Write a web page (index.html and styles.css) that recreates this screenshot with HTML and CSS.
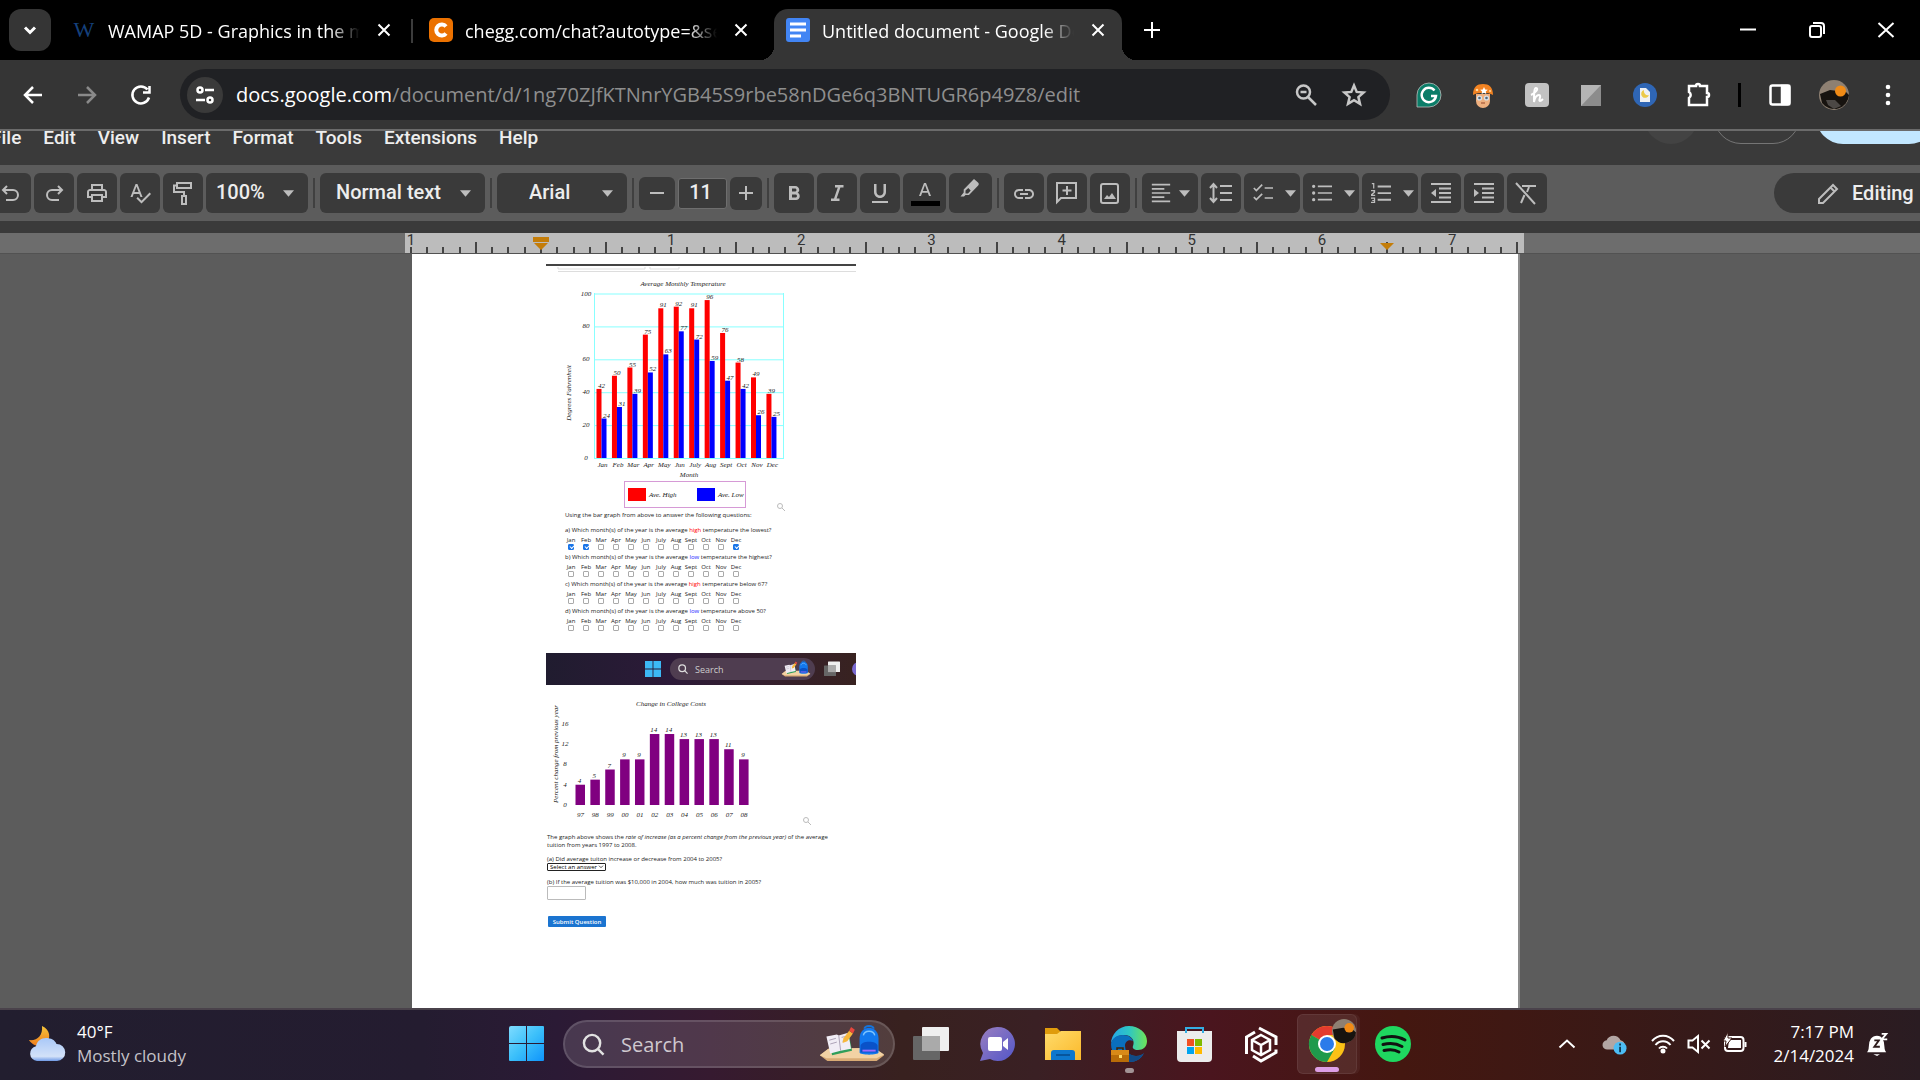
FILE: index.html
```html
<!DOCTYPE html>
<html lang="en">
<head>
    <meta charset="UTF-8">
    <meta name="viewport" content="width=device-width, initial-scale=1.0">
    <title>Untitled document - Google Docs</title>
    <link rel="stylesheet" href="styles.css">
</head>
<body>
    <header class="tabs">
        <button class="tab-search" aria-label="Search tabs"><svg viewBox="0 0 24 24"><path d="M7 9.500l5 5 5-5"/></svg></button>
        <div class="tab first">
            <span class="wamap">W</span>
            <a href="#" class="tab-title">WAMAP 5D - Graphics in the media</a>
            <button class="close" aria-label="Close tab"><svg viewBox="0 0 24 24"><path d="M6.500 6.500l11 11M17.500 6.500l-11 11"/></svg></button>
        </div>
        <div class="tab second">
            <svg class="favicon" viewBox="0 0 24 24"><rect width="24" height="24" rx="5" fill="#eb7100"/><path d="M17 8.500A5.500 5.500 0 1 0 17 15.500" fill="none" stroke="#fff" stroke-width="4"/></svg>
            <a href="#" class="tab-title">chegg.com/chat?autotype=&amp;search</a>
            <button class="close" aria-label="Close tab"><svg viewBox="0 0 24 24"><path d="M6.500 6.500l11 11M17.500 6.500l-11 11"/></svg></button>
        </div>
        <div class="tab active">
            <svg class="favicon" viewBox="0 0 24 24"><rect width="24" height="24" rx="3" fill="#4285f4"/><path d="M4 6h16M4 12h16M4 18h11" stroke="#fff" stroke-width="3"/></svg>
            <a href="#" class="tab-title">Untitled document - Google Docs</a>
            <button class="close" aria-label="Close tab"><svg viewBox="0 0 24 24"><path d="M6.500 6.500l11 11M17.500 6.500l-11 11"/></svg></button>
        </div>
        <button class="new-tab" aria-label="New tab"><svg viewBox="0 0 24 24"><path d="M12 4v16M4 12h16"/></svg></button>
        <div class="window-buttons">
            <button aria-label="Minimize"><svg viewBox="0 0 24 24"><path d="M4 11.500h16"/></svg></button>
            <button aria-label="Restore"><svg viewBox="0 0 24 24"><rect x="5" y="8" width="11" height="11" rx="2"/><path d="M8 5h8a3 3 0 0 1 3 3v8"/></svg></button>
            <button aria-label="Close"><svg viewBox="0 0 24 24"><path d="M4.500 5l15 14M19.500 5l-15 14"/></svg></button>
        </div>
    </header>

    <div class="browser-bar">
        <button class="nav-btn" aria-label="Back"><svg viewBox="0 0 24 24"><path d="M21 12H4M12 4l-8 8 8 8"/></svg></button>
        <button class="nav-btn dim" aria-label="Forward"><svg viewBox="0 0 24 24"><path d="M3 12h17M12 4l8 8-8 8"/></svg></button>
        <button class="nav-btn" aria-label="Reload"><svg viewBox="0 0 24 24"><path d="M20 14.500A8.500 8.500 0 1 1 18.500 6.500M20.500 3v6.500H14"/></svg></button>
        <div class="address">
            <button class="site-info" aria-label="Site information"><svg viewBox="0 0 24 24"><circle cx="7" cy="7" r="2.500"/><path d="M12 7h9M3 17h9"/><circle cx="17" cy="17" r="2.500"/></svg></button>
            <a href="#" class="url"><b>docs.google.com</b>/document/d/1ng70ZJfKTNnrYGB45S9rbe58nDGe6q3BNTUGR6p49Z8/edit</a>
            <button class="addr-btn" aria-label="Zoom"><svg viewBox="0 0 24 24"><circle cx="9.500" cy="9" r="6.500"/><path d="M14 14l8 8M6.500 9h6"/></svg></button>
            <button class="addr-btn" aria-label="Bookmark"><svg viewBox="0 0 24 24"><path d="M12 2.500l2.700 6.400 6.900.6-5.200 4.600 1.600 6.800-6-3.600-6 3.600 1.600-6.800-5.200-4.600 6.900-.6z"/></svg></button>
        </div>
        <div class="extensions">
            <button aria-label="Grammarly"><svg viewBox="0 0 24 24"><path d="M12 0a12 12 0 1 1 0 24H0V12A12 12 0 0 1 12 0z" fill="#0b7d68" stroke="#bbb" stroke-width=".8"/><path d="M17.500 7.500A7.200 7.200 0 1 0 19 13h-5" fill="none" stroke="#fff" stroke-width="2.400"/></svg></button>
            <button aria-label="Helper"><svg viewBox="0 0 24 24"><path d="M5 11h14v7a6 6 0 0 1-14 0z" fill="#efb07f"/><path d="M2 12C2 4 6 1 12 1s10 3 10 11c-5-3-15-3-20 0z" fill="#f28322"/><path d="M13 4l1.200 2.400 2.600.3-2 1.800.5 2.600-2.300-1.300-2.400 1.300.5-2.600-2-1.800 2.700-.3z" fill="#fff"/><circle cx="6" cy="7" r="1.300" fill="#ffd9a0"/><circle cx="19" cy="8" r="1" fill="#ffd9a0"/><circle cx="8.500" cy="15" r="2.600" fill="#d8e3ec"/><circle cx="15.500" cy="15" r="2.600" fill="#d8e3ec"/><circle cx="8.500" cy="15" r="1.300" fill="#52687c"/><circle cx="15.500" cy="15" r="1.300" fill="#52687c"/><path d="M10 20h4" stroke="#b46a46" stroke-width="1.500"/></svg></button>
            <button aria-label="Honey"><svg viewBox="0 0 24 24"><rect width="24" height="24" rx="4" fill="#c2c2c2"/><path d="M6 12c5-2 8-7 5-7-2 0-2 6-2 14 1-5 3-7 5-7 3 0-1 6 1 6 1 0 2-1 3-2" fill="none" stroke="#fff" stroke-width="2"/></svg></button>
            <button aria-label="Reader"><svg viewBox="0 0 24 24"><rect x="2" y="2" width="20" height="21" fill="#8c8c8c"/><path d="M2 23V2h20z" fill="#b4b4b4"/></svg></button>
            <button aria-label="Docs dark mode"><svg viewBox="0 0 24 24"><circle cx="12" cy="12" r="12" fill="#2f66b5"/><path d="M7 5h6l4 4v10H7z" fill="#eef1f4"/><path d="M11 7a4 4 0 1 0 5 5 4 4 0 0 1-5-5z" fill="#ecca48"/></svg></button>
            <button class="line" aria-label="Extensions"><svg viewBox="0 0 24 24"><path d="M2 3h7a2 2 0 0 1 4 0h7v7a2 2 0 0 1 0 4v8H2v-7a3.500 3.500 0 0 0 0-6z"/></svg></button>
            <i class="ext-sep"></i>
            <button class="line" aria-label="Side panel"><svg viewBox="0 0 24 24"><rect x="2.500" y="2.500" width="19" height="19" rx="2"/><path d="M14 3h7v18h-7z" fill="#fff"/></svg></button>
            <button aria-label="Profile"><svg class="avatar" viewBox="0 0 30 30"><circle cx="15" cy="15" r="15" fill="#8e8072"/><path d="M1 14l10-4 16 2 3 3a15 15 0 0 1-27 8z" fill="#17130f"/><path d="M7 20l9 0 6 6-7 3-6-4z" fill="#4c4845"/><circle cx="21.500" cy="11" r="5.500" fill="#f18b16"/></svg></button>
            <button aria-label="Menu"><svg viewBox="0 0 24 24" fill="#fff"><circle cx="12" cy="4" r="2.300"/><circle cx="12" cy="12" r="2.300"/><circle cx="12" cy="20" r="2.300"/></svg></button>
        </div>
    </div>

    <nav class="menu">
        <a href="#">File</a>
        <a href="#">Edit</a>
        <a href="#">View</a>
        <a href="#">Insert</a>
        <a href="#">Format</a>
        <a href="#">Tools</a>
        <a href="#">Extensions</a>
        <a href="#">Help</a>
        <div class="doc-actions"><button class="history" aria-label="History"></button><button class="meet" aria-label="Meet"></button><button class="share" aria-label="Share"></button></div>
    </nav>

    <div class="toolbar">
        <button class="tool" aria-label="Undo"><svg viewBox="0 0 24 24" class="stroke"><path d="M8 5L4 9l4 4M4 9h10a5 5 0 0 1 0 10H7"/></svg></button>
        <button class="tool" aria-label="Redo"><svg viewBox="0 0 24 24" class="stroke"><path d="M16 5l4 4-4 4M20 9H10a5 5 0 0 0 0 10h7"/></svg></button>
        <button class="tool" aria-label="Print"><svg viewBox="0 0 24 24"><path d="M19 8h-1V3H6v5H5c-1.660 0-3 1.340-3 3v6h4v4h12v-4h4v-6c0-1.660-1.340-3-3-3zM8 5h8v3H8V5zm8 14H8v-4h8v4zm2-4v-2H6v2H4v-4c0-.55.45-1 1-1h14c.55 0 1 .45 1 1v4h-2z"/></svg></button>
        <button class="tool" aria-label="Spelling"><svg viewBox="0 0 24 24"><path d="M12.450 16h2.090L9.430 3H7.570L2.460 16h2.090l1.120-3h5.640l1.140 3zm-6.020-5L8.500 5.480 10.570 11H6.430zm15.160.59l-8.090 8.090L9.830 16l-1.410 1.410 5.090 5.090L23 13l-1.410-1.410z"/></svg></button>
        <button class="tool" aria-label="Paint format"><svg viewBox="0 0 24 24" class="stroke"><path d="M6 2h14v5H6zM6 4.500H3V11h10v4M11 15h4v8h-4z"/></svg></button>
        <div class="pick zoom"><select aria-label="Zoom"><option>100%</option></select><svg viewBox="0 0 12 8"><path d="M0 1h12L6 8z"/></svg></div>
        <i class="sep"></i>
        <div class="pick style"><select aria-label="Styles"><option>Normal text</option></select><svg viewBox="0 0 12 8"><path d="M0 1h12L6 8z"/></svg></div>
        <i class="sep"></i>
        <div class="pick font"><select aria-label="Font"><option>Arial</option></select><svg viewBox="0 0 12 8"><path d="M0 1h12L6 8z"/></svg></div>
        <i class="sep"></i>
        <button class="tool step minus" aria-label="Decrease font size"><svg viewBox="0 0 24 24" class="stroke"><path d="M5 12h14"/></svg></button>
        <input class="font-size" type="text" value="11" aria-label="Font size">
        <button class="tool step plus" aria-label="Increase font size"><svg viewBox="0 0 24 24" class="stroke"><path d="M5 12h14M12 5v14"/></svg></button>
        <i class="sep"></i>
        <button class="tool" aria-label="Bold"><svg viewBox="0 0 24 24"><path d="M15.600 11.790c.97-.67 1.650-1.770 1.650-2.790 0-2.260-1.750-4-4-4H7v14h7.040c2.090 0 3.710-1.700 3.710-3.790 0-1.520-.86-2.820-2.150-3.420zM10 7.500h3c.83 0 1.500.67 1.500 1.500s-.67 1.500-1.500 1.500h-3v-3zm3.500 9H10v-3h3.500c.83 0 1.500.67 1.500 1.500s-.67 1.500-1.500 1.500z"/></svg></button>
        <button class="tool" aria-label="Italic"><svg viewBox="0 0 24 24"><path d="M10 4v2.500h2.800l-3.800 11H6V20h8.500v-2.500h-2.900l3.800-11H18.500V4z"/></svg></button>
        <button class="tool" aria-label="Underline"><svg viewBox="0 0 24 24"><path d="M12 17c3.310 0 6-2.690 6-6V3h-2.500v8c0 1.930-1.570 3.500-3.500 3.500S8.500 12.930 8.500 11V3H6v8c0 3.310 2.690 6 6 6zm-8 3v2h16v-2H4z"/></svg></button>
        <button class="tool wide" aria-label="Text color"><svg viewBox="0 0 24 24"><path d="M11 2L6 15h2l1.200-3.300h5.600L16 15h2L13 2zm-1.200 8L12 4l2.200 6z"/><path d="M-2 20h29v5H-2z" fill="#000"/></svg></button>
        <button class="tool wide" aria-label="Highlight"><svg viewBox="0 -1 24 24"><path transform="translate(-1 -4)" fill-rule="evenodd" d="M16 1l4 3.500c1 1 1 2 .2 3L11 17H7.500L6 18.500H2.500l3.200-4v-3L15 2zM7.500 12.500v3H10l2.700-3-2.400-2.500z"/></svg></button>
        <i class="sep"></i>
        <button class="tool" aria-label="Link"><svg viewBox="0 0 24 24"><path d="M3.900 13c0-1.710 1.390-3.100 3.100-3.100h4V8H7c-2.760 0-5 2.240-5 5s2.240 5 5 5h4v-1.900H7c-1.710 0-3.100-1.390-3.100-3.100zM8 14h8v-2H8v2zm9-6h-4v1.900h4c1.710 0 3.100 1.390 3.100 3.100s-1.390 3.100-3.100 3.100h-4V18h4c2.760 0 5-2.240 5-5s-2.240-5-5-5z"/></svg></button>
        <button class="tool" aria-label="Comment"><svg viewBox="0 0 24 24" class="stroke"><path d="M2 21V2h19v15H6zM12 5v9M7.500 9.500h9"/></svg></button>
        <button class="tool" aria-label="Image"><svg viewBox="0 0 24 24" class="stroke"><rect x="3" y="3" width="17" height="19" rx="2"/><path d="M6 18l3-4 2 2 3-4 4 6z" fill="#bdbdbd" stroke="none"/></svg></button>
        <i class="sep"></i>
        <button class="tool split align" aria-label="Align"><svg viewBox="0 0 24 24" class="stroke"><path d="M1 2h22M1 7h15M1 12h22M1 17h15M1 22h22"/></svg><svg class="caret" viewBox="0 0 12 8"><path d="M0 1h12L6 8z"/></svg></button>
        <button class="tool" aria-label="Line spacing"><svg viewBox="0 0 24 24" class="stroke"><path d="M11 5h12M11 12h12M11 19h12M4.500 4v17M1 7l3.500-4L8 7M1 17l3.500 4L8 17"/></svg></button>
        <button class="tool split" aria-label="Checklist"><svg viewBox="0 0 24 24" class="stroke"><path d="M1 6l3 3 7-7M1 17l3 3 7-7M14 6h10M14 18h10"/></svg><svg class="caret" viewBox="0 0 12 8"><path d="M0 1h12L6 8z"/></svg></button>
        <button class="tool split" aria-label="Bulleted list"><svg viewBox="0 0 24 24" class="stroke"><path d="M7 4h17M7 12h17M7 20h17"/><circle cx="2" cy="4" r="1"/><circle cx="2" cy="12" r="1"/><circle cx="2" cy="20" r="1"/></svg><svg class="caret" viewBox="0 0 12 8"><path d="M0 1h12L6 8z"/></svg></button>
        <button class="tool split" aria-label="Numbered list"><svg viewBox="0 0 24 24"><path d="M8 3h16v2.300H8zM8 11h16v2.300H8zM8 19h16v2.300H8zM1 0h3v6.500H2.500V1.500H1zM0 8.500h5v3l-3 2.500h3v1.500H0v-2L3 11v-1H0zM0 17.500h5V24H0v-1.500h3.500v-1H1.500v-1.200h2V19H0z"/></svg><svg class="caret" viewBox="0 0 12 8"><path d="M0 1h12L6 8z"/></svg></button>
        <button class="tool" aria-label="Decrease indent"><svg viewBox="0 0 24 24" class="stroke"><path d="M2 3h20M10 7.500h12M10 12h12M10 16.500h12M2 21h20"/><path d="M7 8v8l-5-4z" fill="#bdbdbd" stroke="none"/></svg></button>
        <button class="tool" aria-label="Increase indent"><svg viewBox="0 0 24 24" class="stroke"><path d="M2 3h20M10 7.500h12M10 12h12M10 16.500h12M2 21h20"/><path d="M2 8v8l5-4z" fill="#bdbdbd" stroke="none"/></svg></button>
        <button class="tool" aria-label="Clear formatting"><svg viewBox="0 0 24 24" class="stroke"><path d="M1 2l19 21M7 5h14M14 6l-2 5M9.500 14L6 22"/></svg></button>
        <button class="mode"><svg viewBox="0 0 24 24" class="stroke"><path d="M3 22v-4L17 4l4 4L7 22zM14.500 6.500l4 4"/></svg>Editing</button>
    </div>

    <div class="ruler"><svg id="ruler" viewBox="0 0 1119 20"></svg></div>

    <main>
        <div class="page">
            <div class="worksheet">
                <svg class="chart" id="temperature" viewBox="0 0 310 247"></svg>
                <p class="intro">Using the bar graph from above to answer the following questions:</p>
                <div id="questions"></div>
                <div class="shot-bar">
                    <svg class="shot-win" viewBox="0 0 36 36"><path d="M0 0h17v17H0zM19 0h17v17H19zM0 19h17v17H0zM19 19h17v17H19z" fill="#3cb9f5"/></svg>
                    <div class="shot-search">
                        <svg viewBox="0 0 24 24"><circle cx="10" cy="10" r="8" fill="none" stroke="#ddd" stroke-width="3"/><path d="M16 16l7 7" stroke="#ddd" stroke-width="3"/></svg>
                        <span>Search</span>
                        <svg class="shot-school" viewBox="0 0 68 38"><use href="#school"/></svg>
                    </div>
                    <svg class="shot-view" viewBox="0 0 36 36"><use href="#taskview"/></svg>
                    <i class="shot-chat"></i>
                </div>
                <svg class="chart" id="costs" viewBox="0 0 310 147"></svg>
                <form class="tuition">
                    <p>The graph above shows the <em>rate of increase (as a percent change from the previous year)</em> of the average<br>tuition from years 1997 to 2008.</p>
                    <label for="trend">(a) Did average tuiton increase or decrease from 2004 to 2005?</label>
                    <div class="answer"><select id="trend"><option>Select an answer</option></select><svg viewBox="0 0 8 6"><path d="M1 1l3 3 3-3"/></svg></div>
                    <label for="amount">(b) If the average tuition was $10,000 in 2004, how much was tuition in 2005?</label>
                    <input id="amount" type="text">
                    <button type="button">Submit Question</button>
                </form>
            </div>
        </div>
    </main>

    <footer class="taskbar">
        <div class="weather">
            <svg viewBox="0 0 36 36"><defs><linearGradient id="moon" x2="0" y2="1"><stop offset="0" stop-color="#f6c53a"/><stop offset="1" stop-color="#ef7d1c"/></linearGradient><linearGradient id="cloud" x2="0" y2="1"><stop offset="0" stop-color="#a9c8f8"/><stop offset=".8" stop-color="#d3e1f8"/><stop offset="1" stop-color="#6f9ae6"/></linearGradient></defs><path d="M13 0c8 3 10 13 3 18-6 4-13 1-16-4 8 1 14-4 13-14z" fill="url(#moon)"/><path d="M8 35a7.500 7.500 0 0 1-1-14.800C8 15 12 12 17 12c5 0 9 2 10.500 6A8.500 8.500 0 0 1 28 35z" fill="url(#cloud)"/></svg>
            <div><span>40°F</span><span class="muted">Mostly cloudy</span></div>
        </div>
        <div class="apps">
            <button aria-label="Start"><svg viewBox="0 0 36 36"><defs><linearGradient id="win" x2="1" y2="1"><stop offset="0" stop-color="#7fdcff"/><stop offset=".5" stop-color="#3cc0fa"/><stop offset="1" stop-color="#0f94fb"/></linearGradient></defs><path d="M2 0h15v17H0V2a2 2 0 0 1 2-2zM18 0h16a1 1 0 0 1 1 1v16H18zM0 18h17v17H1a1 1 0 0 1-1-1zM18 18h17v16a1 1 0 0 1-1 1H18z" fill="url(#win)"/></svg></button>
            <div class="search">
                <svg class="glass" viewBox="0 0 24 24"><circle cx="10.500" cy="10.500" r="8.500"/><path d="M16.500 16.500l6 6"/></svg>
                <input type="text" placeholder="Search" aria-label="Search">
                <svg class="school" viewBox="0 0 68 38">
                    <g id="school">
                        <path d="M0 31l9-7 48-1 11 8-8 6H8z" fill="#d9ab75"/><path d="M0 31l9-7 48-1 11 7-8 4H7z" fill="#f2d2a4"/>
                        <path d="M9 13l22-3 3 16-21 5z" fill="#2f9e5a"/><path d="M7 11l11-2 2 1 10-3 3 17-11 2-11 3z" fill="#f1edf5"/><path d="M20 10l2 16M10 15l7-2M11 19l7-2M23 12l5-1M24 16l5-1" stroke="#a9a0b4" stroke-width="1"/>
                        <path d="M25 13l6-8 4 3-6 8-5 2z" fill="#f6b73c"/><path d="M31 5l2-4 4 3-2 4z" fill="#e8473c"/>
                        <path d="M47 3c1-4 9-4 10 0" fill="none" stroke="#1673d8" stroke-width="2"/><path d="M42 13c0-15 20-15 20 0v15c0 3-20 3-20 0z" fill="#1278ee"/><path d="M43 21c0-6 18-6 18 0v7H43z" fill="#0a52c8"/><path d="M46 10c1-6 11-6 12 0" fill="none" stroke="#7cc4ff" stroke-width="1.500"/><path d="M45 26h14" stroke="#9c6cff" stroke-width="2"/>
                    </g>
                </svg>
            </div>
            <button aria-label="Task view"><svg viewBox="0 0 36 36"><g id="taskview"><rect x="9" y="1" width="27" height="24" rx="1" fill="#efefef"/><rect y="10" width="27" height="24" rx="1" fill="#666"/><path d="M9 10h18v15H9z" fill="#aaa"/></g></svg></button>
            <button aria-label="Chat"><svg viewBox="0 0 36 36"><defs><linearGradient id="chat" x2="1" y2="1"><stop offset="0" stop-color="#9a7fc0"/><stop offset="1" stop-color="#5356c8"/></linearGradient></defs><path d="M18 1a17 17 0 1 1-7 32L1 35l3-8A17 17 0 0 1 18 1z" fill="url(#chat)"/><rect x="9" y="11" width="14" height="14" rx="2" fill="#fff"/><path d="M24 16l5-4v12l-5-4z" fill="#fff"/></svg></button>
            <button aria-label="File Explorer"><svg viewBox="0 0 36 36"><defs><linearGradient id="fold" x2="1" y2="1"><stop offset="0" stop-color="#ffdb6b"/><stop offset="1" stop-color="#fbb92b"/></linearGradient></defs><path d="M0 2h12l4 4v6H0z" fill="#e09c0c"/><path d="M0 8h12l4-3h20v29H0z" fill="url(#fold)"/><path d="M6 34V27a3 3 0 0 1 3-3h18a3 3 0 0 1 3 3v7z" fill="#0d77cd"/><path d="M11 29h14" stroke="#064a8b" stroke-width="1.500"/></svg></button>
            <button class="open" aria-label="Edge"><svg viewBox="0 0 36 36"><defs><linearGradient id="edge"><stop offset="0" stop-color="#25a5e8"/><stop offset=".5" stop-color="#2ec6c4"/><stop offset="1" stop-color="#6fe457"/></linearGradient></defs><path d="M0 18C0 8 8 0 18 0s18 7 18 15c0 6-4 9-9 9-4 0-6-2-5-4 2-5-1-11-9-11C6 9 1 13 0 18z" fill="url(#edge)"/><path d="M0 18C1 12 6 9 12 9c6 0 9 3 10 6-5-2-8 1-8 5 0 6 5 10 11 10 4 0 7-2 8-3-3 6-8 9-15 9C8 36 0 28 0 18z" fill="#0a6fbd"/><path d="M14 19c0 7 6 11 11 11 4 0 7-2 8-3-3 6-8 9-15 9z" fill="#124a86"/><rect y="24" width="18" height="12" fill="#b96c08"/><path d="M0 24h18v5H0z" fill="#d98a18"/><path d="M6 24v-2h6v2" fill="none" stroke="#412304" stroke-width="1.500"/><path d="M8 29h3v3H8z" fill="#ffdc69"/></svg></button>
            <button aria-label="Microsoft Store"><svg viewBox="0 0 36 36"><path d="M9 7V2h17v5" fill="none" stroke="#34aee3" stroke-width="2"/><path d="M0 5h35v27a4 4 0 0 1-4 4H4a4 4 0 0 1-4-4z" fill="#ececec"/><path d="M9 7V4M26 7V4" stroke="#34aee3" stroke-width="2"/><path d="M10 13h7v7h-7z" fill="#f25022"/><path d="M18 13h7v7h-7z" fill="#7fba00"/><path d="M10 21h7v7h-7z" fill="#00a4ef"/><path d="M18 21h7v7h-7z" fill="#ffb900"/></svg></button>
            <button aria-label="Cube"><svg viewBox="0 0 36 36" fill="none" stroke="#fff" stroke-width="3"><path d="M12 6L3.500 11v17M16 2l17 9v8M10 30l8 5 15-8.500v-3"/><path d="M18 9l9 5v10l-9 5-9-5V14zM9 14l9 5 9-5M18 19v10" stroke-width="2.500"/></svg></button>
            <button class="current" aria-label="Chrome"><svg viewBox="0 0 36 36"><circle cx="18" cy="18" r="18" fill="#fbc116"/><path d="M18 18L2.400 9A18 18 0 0 1 33.600 9H18z" fill="#e33b2e"/><path d="M2.400 9A18 18 0 0 0 18 36l7.800-13.500L18 18z" fill="#1f9a4c"/><path d="M10.200 22.500L2.400 9" stroke="#1f9a4c"/><circle cx="18" cy="18" r="9" fill="#fff"/><circle cx="18" cy="18" r="7" fill="#2a7bea"/></svg><svg class="badge" viewBox="0 0 30 30"><circle cx="15" cy="15" r="15" fill="#8e8072"/><path d="M1 13l13-2 13 3 3 3a15 15 0 0 1-27 7z" fill="#17130f"/><circle cx="21.500" cy="11" r="6" fill="#f18b16"/></svg></button>
            <button aria-label="Spotify"><svg viewBox="0 0 36 36"><circle cx="18" cy="18" r="18" fill="#1fd760"/><path d="M7 12c8-2.500 16-2 23 2M8 18.500c7-2 13-1.500 19 2M9 24.500c6-1.500 11-1 15 1.500" fill="none" stroke="#111" stroke-width="3" stroke-linecap="round"/></svg></button>
        </div>
        <div class="tray">
            <button aria-label="Hidden icons"><svg viewBox="0 0 24 24"><path d="M4.500 15.500l7.500-7 7.500 7"/></svg></button>
            <button class="onedrive" aria-label="OneDrive"><svg viewBox="0 0 26 26"><path d="M5 19a5 5 0 0 1-1-10c2-6 12-7 15 0 6 1 6 10 0 10z" fill="#b3a6a4" stroke="none"/><circle cx="18.500" cy="17.500" r="7" fill="#4cbcf4" stroke="none"/><path d="M18.500 16v6M18.500 12.500v2" stroke="#143a50"/></svg></button>
            <button aria-label="Wi-Fi"><svg viewBox="0 0 24 24"><path d="M1 9c6-7 16-7 22 0M4.500 13c4-5 11-5 15 0M8 16.500c2-2.500 6-2.500 8 0"/><circle cx="12" cy="19" r="1.500" fill="#fff"/></svg></button>
            <button aria-label="Volume"><svg viewBox="0 0 24 24"><path d="M1.500 8.500h4L11 4v16l-5.500-4.500h-4zM14.500 8.500l8 8M22.500 8.500l-8 8"/></svg></button>
            <button aria-label="Battery"><svg viewBox="0 0 24 24"><rect x="2" y="5" width="18.500" height="14" rx="3"/><path d="M6 8h12v8H5z" fill="#fff" stroke="none"/><path d="M22.500 10v5"/><path d="M5 0L0 9h3l-1 6 7-9H5z" fill="#fff" stroke="#3a1b17" stroke-width="1"/></svg></button>
            <div class="clock"><span>7:17 PM</span><span>2/14/2024</span></div>
            <button class="bell" aria-label="Notifications"><svg viewBox="0 0 24 26"><path d="M2 21c2-3 0-9 3-13 3-4 9-4 11 0 3 4 1 10 3 13z" fill="#fff"/><path d="M7 24h7l-3 2z" fill="#fff" stroke="none"/><path d="M8 9h5l-5 7h6" stroke="#2e1c1c"/><path d="M16 2h5l-5 6h6"/></svg></button>
        </div>
    </footer>
    <script src="script.js"></script>
</body>
</html>
```
FILE: styles.css
```css
* {
    box-sizing: border-box;
}
body {
    font-family: "Open Sans", "Noto Sans", sans-serif;
    margin: 0;
    height: 100vh;
    display: flex;
    flex-direction: column;
    overflow: hidden;
    background: #5c5c5c;
    color: #fff;
}
button {
    background: none;
    border: none;
    padding: 0;
    color: inherit;
    font: inherit;
    display: flex;
    align-items: center;
    justify-content: center;
    flex-shrink: 0;
}
a {
    color: inherit;
    text-decoration: none;
}
p {
    margin: 0;
}
svg {
    display: block;
    overflow: visible;
    flex-shrink: 0;
}

/* Tab strip */
.tabs {
    background: #000;
    height: 60px;
    display: flex;
    padding: 9px 0 0 9px;
    flex-shrink: 0;
}
.tabs button svg {
    width: 24px;
    height: 24px;
    fill: none;
    stroke: #fff;
    stroke-width: 2;
}
.tabs .tab-search {
    width: 42px;
    height: 42px;
    border-radius: 12px;
    background: #353535;
    margin-right: 12px;
}
.tabs .tab-search svg {
    stroke-width: 3;
}
.tab {
    display: flex;
    align-items: center;
    height: 42px;
    padding: 0 12px;
    gap: 12px;
    position: relative;
    font-size: 18px;
}
.first {
    width: 350px;
    padding: 0 17px 0 9px;
}
.second {
    width: 361px;
    padding: 0 21px 0 16px;
}
.second::before {
    content: "";
    position: absolute;
    left: -2px;
    top: 10px;
    width: 2px;
    height: 24px;
    background: #3c3c3c;
}
.active {
    background: #353535;
    width: 348px;
    height: 51px;
    padding-bottom: 9px;
    border-radius: 14px 14px 0 0;
}
.active::before, .active::after {
    content: "";
    position: absolute;
    bottom: 0;
    width: 14px;
    height: 14px;
}
.active::before {
    left: -14px;
    background: radial-gradient(circle at 0 0, transparent 14px, #353535 14px);
}
.active::after {
    right: -14px;
    background: radial-gradient(circle at 100% 0, transparent 14px, #353535 14px);
}
.favicon {
    width: 24px;
    height: 24px;
}
.wamap {
    width: 24px;
    font: 22px "Liberation Serif", serif;
    color: #15407c;
    text-align: center;
}
.tab-title {
    flex: 1;
    overflow: hidden;
    white-space: nowrap;
    padding-top: 2px;
    mask-image: linear-gradient(90deg, #000 88%, transparent);
}
.new-tab {
    width: 60px;
    height: 42px;
}
.window-buttons {
    margin-left: auto;
    display: flex;
    height: 42px;
}
.window-buttons button {
    width: 69px;
}

/* Address bar */
.browser-bar {
    background: #353535;
    border-bottom: 2px solid #6b6b6b;
    height: 71px;
    display: flex;
    align-items: center;
    padding: 0 5px 0 6px;
    flex-shrink: 0;
}
.nav-btn {
    width: 54px;
}
.browser-bar svg {
    width: 24px;
    height: 24px;
}
.nav-btn svg, .site-info svg, .addr-btn svg, .line svg {
    fill: none;
    stroke: #fff;
    stroke-width: 2.5;
}
.nav-btn.dim svg {
    stroke: #8a8a8a;
}
.address {
    flex: 1;
    margin: 0 12px;
    height: 51px;
    border-radius: 26px;
    background: #202124;
    display: flex;
    align-items: center;
    padding: 0 12px 0 7px;
}
.site-info {
    width: 36px;
    height: 36px;
    border-radius: 50%;
    background: #3a3a3a;
    margin-right: 13px;
}
.url {
    flex: 1;
    font-size: 20px;
    color: #8e8e8e;
    white-space: nowrap;
    overflow: hidden;
}
.url b {
    color: #fff;
    font-weight: 400;
}
.addr-btn {
    width: 48px;
}
.addr-btn svg {
    stroke: #c7c7c7;
}
.extensions {
    display: flex;
    align-items: center;
}
.extensions button {
    width: 54px;
}
.browser-bar .avatar {
    width: 30px;
    height: 30px;
}
.ext-sep {
    width: 3px;
    height: 24px;
    background: #000;
    margin: 0 12px;
}

/* Docs menu and toolbar */
.menu {
    background: #3a3a3a;
    height: 34px;
    display: flex;
    gap: 22px;
    font: 500 19px/14px Roboto, sans-serif;
    overflow: hidden;
    flex-shrink: 0;
    color: #eee;
}
.menu a:first-child {
    margin-left: -9px;
}
.doc-actions {
    margin-left: auto;
    display: flex;
    align-items: flex-end;
    gap: 16px;
    height: 13px;
}
.doc-actions button {
    height: 54px;
    border-radius: 27px;
}
.history {
    width: 54px;
    background: #434343;
}
.doc-actions .meet {
    width: 86px;
    border: 1px solid #757575;
}
.doc-actions .share {
    width: 120px;
    background: #c2e7ff;
    margin-right: -16px;
}
.toolbar {
    background: #5c5c5c;
    border-bottom: 12px solid #3a3a3a;
    height: 68px;
    display: flex;
    align-items: center;
    gap: 3px;
    overflow: hidden;
    flex-shrink: 0;
    font: 500 20px Roboto, sans-serif;
    color: #ededed;
}
.tool {
    width: 40px;
    height: 40px;
    border-radius: 6px;
    background: #3a3a3a;
}
.toolbar .tool:first-child {
    margin-left: -9px;
}
.tool svg, .mode svg {
    width: 24px;
    height: 24px;
    fill: #bdbdbd;
}
.tool svg.stroke, .mode svg.stroke {
    fill: none;
    stroke: #bdbdbd;
    stroke-width: 2;
}
.wide {
    width: 43px;
}
.split {
    width: 56px;
    gap: 12px;
    padding-left: 5px;
}
.align {
    gap: 8px;
    padding: 0;
}
.split svg {
    width: 20px;
}
.tool .caret, .pick svg {
    width: 11px;
    height: 8px;
    fill: #bdbdbd;
}
.sep {
    width: 2px;
    height: 30px;
    background: #404040;
    margin: 0 2px;
    flex-shrink: 0;
}
.pick {
    position: relative;
    height: 40px;
    flex-shrink: 0;
}
.pick select {
    appearance: none;
    width: 100%;
    height: 100%;
    border: none;
    border-radius: 6px;
    background: #3a3a3a;
    color: inherit;
    font: inherit;
    padding: 0 16px 3px;
}
.pick svg {
    position: absolute;
    right: 14px;
    top: 16px;
}
.zoom {
    width: 102px;
}
.zoom select {
    padding: 0 10px 3px;
}
.style {
    width: 165px;
}
.font {
    width: 130px;
}
.font select {
    padding: 0 32px 3px;
}
.step {
    height: 33px;
}
.minus {
    width: 36px;
}
.plus {
    width: 32px;
}
.font-size {
    width: 49px;
    height: 31px;
    border: 1px solid #6e6e6e;
    border-radius: 3px;
    background: #3a3a3a;
    color: inherit;
    font: inherit;
    text-align: center;
    padding: 0 4px 3px 0;
}
.mode {
    margin: 0 -40px 0 auto;
    width: 186px;
    height: 40px;
    border-radius: 20px;
    background: #3a3a3a;
    justify-content: flex-start;
    padding-left: 42px;
    gap: 12px;
}

/* Ruler and page */
.ruler {
    background: #6d6d6d;
    border-bottom: 1px solid #525252;
    height: 21px;
    padding-left: 8px;
    display: flex;
    justify-content: center;
    flex-shrink: 0;
}
#ruler {
    width: 1119px;
    height: 20px;
    background: #bcbcbc;
    font: 15px Roboto, sans-serif;
    overflow: hidden;
}
main {
    flex: 1;
    min-height: 0;
    padding-left: 12px;
    display: flex;
    justify-content: center;
    overflow: hidden;
}
.page {
    background: #fff;
    color: #222;
    width: 1108px;
    border-right: 2px solid #8c8c8c;
    padding: 10px 134px;
}
.worksheet {
    width: 310px;
    font: 6px/9px "Open Sans", sans-serif;
}
.chart {
    width: 100%;
    font: italic 7px "Liberation Serif", serif;
    fill: #222;
}
.intro {
    padding-left: 19px;
    margin-bottom: 6px;
    white-space: nowrap;
}
.question {
    border: none;
    margin: 0 0 2px 19px;
    padding: 0;
    white-space: nowrap;
}
.question legend {
    padding: 0;
    height: 10px;
}
.red {
    color: #f00;
}
.blue {
    color: #22f;
}
.months {
    display: grid;
    grid-template-columns: repeat(12, 15px);
    line-height: 8px;
}
.months label {
    display: flex;
    flex-direction: column;
    align-items: center;
    height: 15px;
    padding-right: 3px;
    position: relative;
}
.months input {
    appearance: none;
    width: 6px;
    height: 6px;
    margin: 0;
    border: 1px solid #aaa;
    border-radius: 1px;
}
.months input:checked {
    background: #1a75e8;
    border-color: #1a75e8;
}
.months input:checked::after {
    content: "";
    position: absolute;
    left: 5px;
    top: 9px;
    width: 3px;
    height: 2px;
    border: solid #fff;
    border-width: 0 0 1px 1px;
    rotate: -45deg;
}
.shot-bar {
    margin-top: 21px;
    height: 32px;
    background: linear-gradient(90deg, #201c2f, #2c1a38 40%, #35202f 70%, #382220);
    display: flex;
    align-items: center;
    gap: 9px;
    padding-left: 99px;
    color: #ccc;
    overflow: hidden;
}
.shot-win {
    width: 16px;
    height: 16px;
}
.shot-search {
    width: 145px;
    height: 22px;
    border-radius: 11px;
    background: #4f3d50;
    display: flex;
    align-items: center;
    flex-shrink: 0;
    padding: 0 4px 0 8px;
    gap: 7px;
    font-size: 9px;
}
.shot-search svg {
    width: 10px;
    height: 10px;
}
.shot-search .shot-school {
    width: 30px;
    height: 16px;
    margin-left: auto;
}
.shot-view {
    width: 16px;
    height: 16px;
}
.shot-chat {
    width: 14px;
    height: 14px;
    border-radius: 50%;
    background: #7a6ad0;
    margin-left: 3px;
    flex-shrink: 0;
}
.tuition {
    line-height: 8px;
    padding: 1px 0 0 1px;
    display: flex;
    flex-direction: column;
    align-items: flex-start;
    white-space: nowrap;
}
.tuition p {
    margin-bottom: 6px;
}
.answer {
    position: relative;
    margin-bottom: 7px;
}
.answer select {
    appearance: none;
    display: block;
    width: 59px;
    height: 8px;
    border: 1px solid #222;
    border-radius: 1px;
    background: #fff;
    font: 6px/6px "Open Sans", sans-serif;
    padding: 0 2px;
}
.answer svg {
    position: absolute;
    right: 2px;
    top: 2px;
    width: 6px;
    height: 4px;
    fill: none;
    stroke: #000;
}
.tuition input {
    width: 39px;
    height: 14px;
    border: 1px solid #bbb;
    border-radius: 1px;
    padding: 0 2px;
    font: inherit;
}
.tuition button {
    margin: 16px 0 0 1px;
    width: 58px;
    height: 11px;
    border-radius: 1px;
    background: #1b74d0;
    color: #fff;
    font-weight: 600;
}

/* Windows taskbar */
.taskbar {
    height: 72px;
    flex-shrink: 0;
    border-top: 2px solid #4a424b;
    padding-bottom: 2px;
    background: linear-gradient(90deg, #221e2f, #241c30 22%, #2b1a35 29%, #361a30 37%, #38211f 47%, #3a2024 54%, #4a151e 63%, #441710 73%, #3a1916 84%, #2a1c22);
    display: grid;
    grid-template-columns: 1fr auto 1fr;
    align-items: center;
    font-size: 17px;
    line-height: 24px;
}
.weather {
    display: flex;
    align-items: center;
    gap: 12px;
    padding-left: 29px;
}
.weather > svg {
    width: 36px;
    height: 36px;
}
.weather span, .clock span {
    display: block;
}
.muted {
    color: #c5c3c9;
}
.apps {
    display: flex;
    align-items: center;
    gap: 6px;
}
.apps button {
    width: 60px;
    height: 60px;
    border-radius: 6px;
    position: relative;
}
.apps button svg {
    width: 36px;
    height: 36px;
}
.search {
    width: 332px;
    height: 48px;
    border: 2px solid #ffffff22;
    border-radius: 24px;
    background: #ffffff22;
    display: flex;
    align-items: center;
    padding: 0 8px 0 17px;
}
.glass {
    width: 23px;
    height: 23px;
    fill: none;
    stroke: #e2e2e2;
    stroke-width: 2.5;
}
.search input {
    flex: 1;
    min-width: 0;
    background: none;
    border: none;
    color: #fff;
    font: 20px "Open Sans", sans-serif;
    padding: 0 16px;
}
.search input::placeholder {
    color: #cfc8cf;
}
.school {
    width: 66px;
    height: 36px;
}
.open::after, .current::after {
    content: "";
    position: absolute;
    bottom: 1px;
    width: 9px;
    height: 5px;
    border-radius: 3px;
    background: #a29395;
}
.apps .current {
    background: #ffffff16;
    border: 1px solid #ffffff12;
    box-shadow: 3px 0 0 #ffffff0c;
}
.current::after {
    width: 24px;
    background: #dd9fe6;
}
.apps .current .badge {
    position: absolute;
    right: 0;
    top: 4px;
    width: 24px;
    height: 24px;
}
.tray {
    display: flex;
    align-items: center;
    justify-content: flex-end;
    gap: 12px;
    padding-right: 30px;
}
.tray svg {
    width: 24px;
    height: 24px;
    fill: none;
    stroke: #fff;
    stroke-width: 2;
}
.onedrive {
    margin: 0 12px;
}
.clock {
    text-align: right;
    margin-left: 14px;
}
```
FILE: script.js
```js
const months = ['Jan', 'Feb', 'Mar', 'Apr', 'May', 'Jun', 'July', 'Aug', 'Sept', 'Oct', 'Nov', 'Dec'];
const highs = [42, 50, 55, 75, 91, 92, 91, 96, 76, 58, 49, 39];
const lows = [24, 31, 39, 52, 63, 77, 72, 59, 47, 42, 26, 25];
const years = ['97', '98', '99', '00', '01', '02', '03', '04', '05', '06', '07', '08'];
const costs = [4, 5, 7, 9, 9, 14, 14, 13, 13, 13, 11, 9];

function rect(x, y, w, h, fill) {
    return `<rect x="${x}" y="${y}" width="${w}" height="${h}" fill="${fill}"/>`;
}

function text(x, y, label, extra = 'text-anchor="middle"') {
    return `<text x="${x}" y="${y}" ${extra}>${label}</text>`;
}

const glass = (x, y) => `<g fill="none" stroke="#bbb"><circle cx="${x}" cy="${y}" r="2.500"/><path d="M${x + 2} ${y + 2}l3 3"/></g>`;

function drawRuler() {
    let out = '';
    for (let k = -8; k <= 60; k++) {
        const x = 136 + k * 16.27;
        const tall = Math.abs(k % 8) === 4;
        out += rect(Math.round(x) - 1, tall ? 9 : 14, 2, 12, '#444');
        if (k % 8 === 0 && k !== 0) {
            out += text(k < 0 ? 6 : x, 12, Math.abs(k / 8), 'text-anchor="middle" fill="#333"');
        }
    }
    out += '<path d="M128 4h16v5h-16zM129 10h14l-7 7zM975 10h14l-7 7z" fill="#c47d09"/>';
    document.getElementById('ruler').innerHTML = out;
}

function drawTemperature() {
    let out = rect(0, 0, 310, 2, '#444') + rect(12, 7, 298, 1, '#ddd');
    out += '<path d="M12 3v2h87V3M104 3v2h29V3" fill="none" stroke="#ddd"/>';
    out += text(137, 22, 'Average Monthly Temperature');
    for (let v = 0; v <= 100; v += 20) {
        const y = 194 - v * 1.645;
        out += rect(48, y, 189, 1, '#8ff') + text(40, y + 2, v);
    }
    out += rect(48, 29, 1, 165, '#8ff') + rect(237, 29, 1, 166, '#8ff');
    months.forEach((m, i) => {
        const x = 50.5 + i * 15.45;
        out += rect(x, 194 - highs[i] * 1.645, 5, highs[i] * 1.645, '#f00');
        out += rect(x + 5, 194 - lows[i] * 1.645, 5, lows[i] * 1.645, '#00f');
        out += text(x + 5, 193 - highs[i] * 1.645, highs[i]) + text(x + 10, 193 - lows[i] * 1.645, lows[i]);
        out += text(x + 6, 203, m);
    });
    out += text(143, 213, 'Month');
    out += '<text transform="translate(25 129) rotate(-90)" text-anchor="middle">Degrees Fahrenheit</text>';
    out += '<rect x="78.500" y="217.500" width="121" height="26" fill="none" stroke="#d69ad6"/>';
    out += rect(82, 224, 18, 13, '#f00') + rect(151, 224, 18, 13, '#00f');
    out += text(103, 233, 'Ave. High', '') + text(172, 233, 'Ave. Low', '');
    out += glass(234, 242);
    document.getElementById('temperature').innerHTML = out;
}

function drawCosts() {
    let out = text(125, 21, 'Change in College Costs');
    [0, 4, 8, 12, 16].forEach(v => {
        out += text(19, 122 - v * 5.07, v);
    });
    years.forEach((label, i) => {
        const x = 29.5 + i * 14.87;
        const h = costs[i] * 5.07;
        out += rect(x, 120 - h, 9.5, h, '#800080');
        out += text(x + 4, 118 - h, costs[i]) + text(x + 5, 132, label);
    });
    out += '<text transform="translate(12 69) rotate(-90)" text-anchor="middle">Percent change from previous year</text>';
    out += glass(260, 135);
    document.getElementById('costs').innerHTML = out;
}

function drawQuestions() {
    const questions = [
        ['a', 'high', 'the lowest?', ['Jan', 'Feb', 'Dec']],
        ['b', 'low', 'the highest?', []],
        ['c', 'high', 'below 67?', []],
        ['d', 'low', 'above 50?', []]
    ];
    document.getElementById('questions').innerHTML = questions.map(([id, kind, end, picked]) => `
        <fieldset class="question">
            <legend>${id}) Which month(s) of the year is the average <span class="${kind === 'high' ? 'red' : 'blue'}">${kind}</span> temperature ${end}</legend>
            <div class="months">${months.map(m => `<label>${m}<input type="checkbox" ${picked.includes(m) ? 'checked' : ''}></label>`).join('')}</div>
        </fieldset>`).join('');
}

drawRuler();
drawTemperature();
drawQuestions();
drawCosts();
```
